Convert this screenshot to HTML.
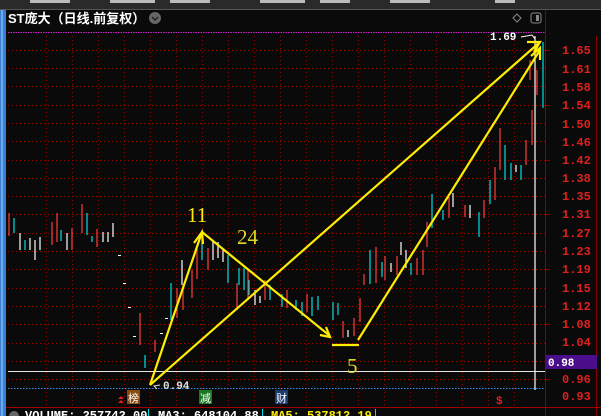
<!DOCTYPE html>
<html><head><meta charset="utf-8"><style>
html,body{margin:0;padding:0;background:#0a0a0a;width:601px;height:416px;overflow:hidden;}
svg{display:block}
</style></head><body>
<svg width="601" height="416" viewBox="0 0 601 416" xmlns="http://www.w3.org/2000/svg" font-family="Liberation Mono, monospace">
<rect width="601" height="416" fill="#0a0a0a"/>
<rect x="0" y="0" width="601" height="9" fill="#2a2a2a"/>
<rect x="0" y="9" width="601" height="1" fill="#555"/>
<g fill="#bbb"><rect x="30" y="0" width="40" height="3"/><rect x="110" y="0" width="45" height="3"/><rect x="170" y="0" width="40" height="3"/><rect x="260" y="0" width="45" height="3"/><rect x="320" y="0" width="30" height="3"/><rect x="390" y="0" width="40" height="3"/><rect x="495" y="0" width="20" height="3"/></g>
<rect x="0" y="10" width="6" height="406" fill="#3b7fd0"/>
<rect x="1" y="10" width="2" height="406" fill="#6aaaf0"/>
<text x="8" y="23" fill="#fff" font-size="13" font-weight="bold" font-family="Liberation Sans, 'Noto Sans CJK SC', sans-serif">ST庞大（日线.前复权）</text>
<circle cx="155" cy="18" r="6" fill="#666"/>
<path d="M152 17l3 3 3-3" stroke="#222" stroke-width="1.5" fill="none"/>
<path d="M517 14l4 4-4 4-4-4z" stroke="#888" fill="none"/>
<rect x="531" y="13" width="10" height="10" rx="2" stroke="#888" fill="none"/><rect x="536" y="15" width="3" height="6" fill="#888"/>
<line x1="8" y1="32.5" x2="545" y2="32.5" stroke="#d020d0" stroke-dasharray="1.5 1"/>
<g stroke="#9a0000" stroke-dasharray="1 3" stroke-width="1">
<line x1="46.5" y1="36" x2="46.5" y2="405"/><line x1="72.5" y1="36" x2="72.5" y2="405"/><line x1="98.5" y1="36" x2="98.5" y2="405"/><line x1="124.5" y1="36" x2="124.5" y2="405"/><line x1="150.5" y1="36" x2="150.5" y2="405"/><line x1="176.5" y1="36" x2="176.5" y2="405"/><line x1="202.5" y1="36" x2="202.5" y2="405"/><line x1="228.5" y1="36" x2="228.5" y2="405"/><line x1="254.5" y1="36" x2="254.5" y2="405"/><line x1="280.5" y1="36" x2="280.5" y2="405"/><line x1="306.5" y1="36" x2="306.5" y2="405"/><line x1="332.5" y1="36" x2="332.5" y2="405"/><line x1="358.5" y1="36" x2="358.5" y2="405"/><line x1="384.5" y1="36" x2="384.5" y2="405"/><line x1="410.5" y1="36" x2="410.5" y2="405"/><line x1="436.5" y1="36" x2="436.5" y2="405"/><line x1="462.5" y1="36" x2="462.5" y2="405"/><line x1="488.5" y1="36" x2="488.5" y2="405"/><line x1="514.5" y1="36" x2="514.5" y2="405"/>
<line x1="8" y1="50.5" x2="545" y2="50.5"/><line x1="8" y1="68.5" x2="545" y2="68.5"/><line x1="8" y1="86.5" x2="545" y2="86.5"/><line x1="8" y1="105.5" x2="545" y2="105.5"/><line x1="8" y1="123.5" x2="545" y2="123.5"/><line x1="8" y1="141.5" x2="545" y2="141.5"/><line x1="8" y1="160.5" x2="545" y2="160.5"/><line x1="8" y1="178.5" x2="545" y2="178.5"/><line x1="8" y1="196.5" x2="545" y2="196.5"/><line x1="8" y1="214.5" x2="545" y2="214.5"/><line x1="8" y1="233.5" x2="545" y2="233.5"/><line x1="8" y1="251.5" x2="545" y2="251.5"/><line x1="8" y1="269.5" x2="545" y2="269.5"/><line x1="8" y1="288.5" x2="545" y2="288.5"/><line x1="8" y1="306.5" x2="545" y2="306.5"/><line x1="8" y1="324.5" x2="545" y2="324.5"/><line x1="8" y1="343.5" x2="545" y2="343.5"/><line x1="8" y1="361.5" x2="545" y2="361.5"/><line x1="8" y1="379.5" x2="545" y2="379.5"/>
</g>
<g stroke-width="1.2">
<g stroke="#ff3c3c"><line x1="9" y1="213" x2="9" y2="236"/><line x1="52" y1="222" x2="52" y2="245"/><line x1="57" y1="213" x2="57" y2="242"/><line x1="72" y1="228" x2="72" y2="250"/><line x1="82" y1="204" x2="82" y2="233"/><line x1="97" y1="229" x2="97" y2="247"/><line x1="140" y1="313" x2="140" y2="345"/><line x1="155" y1="340" x2="155" y2="352"/><line x1="177" y1="288" x2="177" y2="318"/><line x1="183" y1="288" x2="183" y2="310"/><line x1="192" y1="270" x2="192" y2="298"/><line x1="197" y1="248" x2="197" y2="279"/><line x1="208" y1="248" x2="208" y2="270"/><line x1="237" y1="283" x2="237" y2="310"/><line x1="248" y1="270" x2="248" y2="300"/><line x1="265" y1="280" x2="265" y2="300"/><line x1="287" y1="290" x2="287" y2="308"/><line x1="307" y1="294" x2="307" y2="312"/><line x1="343" y1="321" x2="343" y2="338"/><line x1="354" y1="318" x2="354" y2="336"/><line x1="360" y1="298" x2="360" y2="322"/><line x1="364" y1="274" x2="364" y2="285"/><line x1="376" y1="247" x2="376" y2="283"/><line x1="385" y1="256" x2="385" y2="280"/><line x1="397" y1="256" x2="397" y2="275"/><line x1="417" y1="258" x2="417" y2="275"/><line x1="423" y1="250" x2="423" y2="275"/><line x1="427" y1="222" x2="427" y2="247"/><line x1="449" y1="197" x2="449" y2="218"/><line x1="465" y1="205" x2="465" y2="217"/><line x1="484" y1="200" x2="484" y2="218"/><line x1="495" y1="167" x2="495" y2="200"/><line x1="500" y1="128" x2="500" y2="170"/><line x1="526" y1="140" x2="526" y2="165"/><line x1="530" y1="60" x2="530" y2="80"/><line x1="532" y1="110" x2="532" y2="145"/><line x1="537" y1="70" x2="537" y2="95"/></g>
<g stroke="#00e0e0"><line x1="14" y1="218" x2="14" y2="233"/><line x1="25" y1="240" x2="25" y2="250"/><line x1="61" y1="230" x2="61" y2="241"/><line x1="87" y1="213" x2="87" y2="235"/><line x1="92" y1="236" x2="92" y2="242"/><line x1="145" y1="355" x2="145" y2="368"/><line x1="171" y1="283" x2="171" y2="320"/><line x1="202" y1="230" x2="202" y2="260"/><line x1="228" y1="255" x2="228" y2="283"/><line x1="239" y1="268" x2="239" y2="285"/><line x1="244" y1="268" x2="244" y2="290"/><line x1="249" y1="280" x2="249" y2="295"/><line x1="270" y1="285" x2="270" y2="300"/><line x1="282" y1="294" x2="282" y2="307"/><line x1="296" y1="300" x2="296" y2="310"/><line x1="302" y1="302" x2="302" y2="316"/><line x1="312" y1="297" x2="312" y2="316"/><line x1="318" y1="296" x2="318" y2="310"/><line x1="333" y1="302" x2="333" y2="320"/><line x1="338" y1="303" x2="338" y2="315"/><line x1="370" y1="250" x2="370" y2="284"/><line x1="382" y1="262" x2="382" y2="277"/><line x1="411" y1="263" x2="411" y2="275"/><line x1="432" y1="194" x2="432" y2="228"/><line x1="443" y1="210" x2="443" y2="220"/><line x1="479" y1="212" x2="479" y2="237"/><line x1="490" y1="180" x2="490" y2="204"/><line x1="505" y1="145" x2="505" y2="180"/><line x1="511" y1="163" x2="511" y2="180"/><line x1="521" y1="165" x2="521" y2="180"/><line x1="543" y1="42" x2="543" y2="108"/></g>
<g stroke="#fff"><line x1="20" y1="233" x2="20" y2="250"/><line x1="30" y1="238" x2="30" y2="250"/><line x1="35" y1="240" x2="35" y2="260"/><line x1="40" y1="237" x2="40" y2="250"/><line x1="67" y1="233" x2="67" y2="250"/><line x1="103" y1="232" x2="103" y2="242"/><line x1="108" y1="232" x2="108" y2="242"/><line x1="113" y1="223" x2="113" y2="237"/><line x1="182" y1="260" x2="182" y2="285"/><line x1="213" y1="240" x2="213" y2="260"/><line x1="218" y1="242" x2="218" y2="258"/><line x1="223" y1="248" x2="223" y2="262"/><line x1="255" y1="290" x2="255" y2="305"/><line x1="260" y1="296" x2="260" y2="303"/><line x1="348" y1="330" x2="348" y2="337"/><line x1="391" y1="263" x2="391" y2="272"/><line x1="401" y1="242" x2="401" y2="255"/><line x1="406" y1="250" x2="406" y2="268"/><line x1="453" y1="193" x2="453" y2="207"/><line x1="470" y1="205" x2="470" y2="218"/><line x1="516" y1="165" x2="516" y2="172"/><line x1="535" y1="36" x2="535" y2="390"/></g>
<g fill="#fff"><rect x="118" y="255" width="3" height="1"/><rect x="123" y="283" width="3" height="1"/><rect x="128" y="307" width="3" height="1"/><rect x="133" y="336" width="3" height="1"/><rect x="160" y="333" width="3" height="1"/><rect x="165" y="318" width="3" height="1"/></g>
</g>
<line x1="8" y1="371.5" x2="545" y2="371.5" stroke="#e8e8e8"/>
<line x1="8" y1="388.5" x2="545" y2="388.5" stroke="#3a8fe8" stroke-dasharray="1.5 1.5"/>
<g stroke="#ffee00" stroke-width="2.2" fill="none">
<line x1="150" y1="385" x2="202" y2="232"/>
<line x1="202" y1="232" x2="330" y2="336"/>
<line x1="150" y1="385" x2="540" y2="42"/>
<line x1="358" y1="340" x2="540" y2="50"/>
<line x1="332" y1="345" x2="359" y2="345"/>
<path d="M194 243l8-11 1 12" />
<path d="M320 335l10 2-4-10"/>
<path d="M527 42l13 0-6 10"/>
<path d="M531 56l9-8 0 12"/>
</g>
<text x="187" y="222" fill="#ffee00" font-size="21" font-family="Liberation Serif, serif">11</text>
<text x="237" y="244" fill="#e0d820" font-size="21" font-family="Liberation Serif, serif">24</text>
<text x="347" y="373" fill="#e0d820" font-size="21" font-family="Liberation Serif, serif">5</text>
<text x="490" y="40" fill="#fff" font-size="11" font-weight="bold">1.69</text>
<path d="M521 37l11-2 3 4" stroke="#fff" fill="none"/>
<text x="163" y="389" fill="#ddd" font-size="11" font-weight="bold">0.94</text>
<path d="M160 385l-6 1 3 3" stroke="#ddd" fill="none"/>
<line x1="545.5" y1="10" x2="545.5" y2="416" stroke="#8a0000"/>
<line x1="596.5" y1="36" x2="596.5" y2="416" stroke="#8a0000"/>
<g fill="#e02020" font-size="12" font-weight="bold">
<text x="562" y="54">1.65</text><text x="562" y="73">1.61</text><text x="562" y="91">1.58</text><text x="562" y="109">1.54</text><text x="562" y="128">1.50</text><text x="562" y="146">1.46</text><text x="562" y="164">1.42</text><text x="562" y="182">1.38</text><text x="562" y="200">1.35</text><text x="562" y="218">1.31</text><text x="562" y="237">1.27</text><text x="562" y="255">1.23</text><text x="562" y="273">1.19</text><text x="562" y="292">1.15</text><text x="562" y="310">1.12</text><text x="562" y="328">1.08</text><text x="562" y="346">1.04</text><text x="562" y="383">0.96</text><text x="562" y="400">0.93</text>
</g>
<g fill="#8a0000"><rect x="546" y="50" width="4" height="1"/><rect x="546" y="105" width="4" height="1"/><rect x="546" y="160" width="4" height="1"/><rect x="546" y="214" width="4" height="1"/><rect x="546" y="269" width="4" height="1"/><rect x="546" y="324" width="4" height="1"/><rect x="546" y="379" width="4" height="1"/></g>
<rect x="546" y="355" width="51" height="14" fill="#4a0e8a"/>
<text x="548" y="366" fill="#fff" font-size="11" font-weight="bold">0.98</text>
<path d="M118 399l3 -3 3 3z M118 403l3-3 3 3z" fill="#e02020"/>
<rect x="127" y="390" width="13" height="14" fill="#8a4a10"/>
<text x="128" y="402" fill="#fff" font-size="11" font-family="'Noto Sans CJK SC', sans-serif">榜</text>
<rect x="199" y="390" width="13" height="14" fill="#1a7a20"/>
<text x="200" y="402" fill="#fff" font-size="11" font-family="'Noto Sans CJK SC', sans-serif">减</text>
<rect x="275" y="390" width="13" height="14" fill="#1a3a70"/>
<text x="276" y="402" fill="#fff" font-size="11" font-family="'Noto Sans CJK SC', sans-serif">财</text>
<text x="496" y="404" fill="#e02020" font-size="11" font-weight="bold">$</text>
<line x1="6" y1="407.5" x2="601" y2="407.5" stroke="#a00000"/>
<circle cx="14" cy="416" r="5" fill="#666"/>
<g font-size="12" font-weight="bold">
<text x="25" y="419" fill="#fff">VOLUME: 257742.00</text>
<text x="158" y="419" fill="#fff">MA3: 648104.88</text>
<text x="271" y="419" fill="#ffee00">MA5: 537812.19</text>
</g>
<g fill="#00e0e0"><rect x="148" y="409" width="1" height="7"/><rect x="262" y="409" width="1" height="7"/><rect x="375" y="409" width="1" height="7"/></g>
</svg>
</body></html>
